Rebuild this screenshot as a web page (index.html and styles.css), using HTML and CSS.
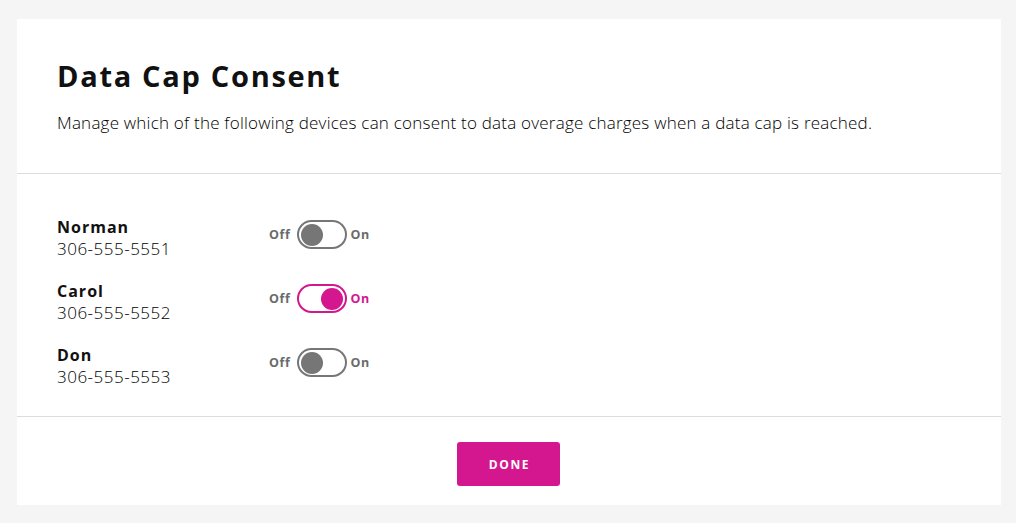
FILE: index.html
```html
<!DOCTYPE html>
<html lang="en">
<head>
<meta charset="utf-8">
<title>Data Cap Consent</title>
<link rel="stylesheet" href="styles.css">
</head>
<body>
<main class="card">
  <header class="card-header">
    <h1 class="title">Data Cap Consent</h1>
    <p class="intro">Manage which of the following devices can consent to data overage charges when a data cap is reached.</p>
  </header>
  <section class="devices">
    <div class="device">
      <div class="device-info">
        <div class="device-name">Norman</div>
        <div class="device-phone">306-555-5551</div>
      </div>
      <div class="switch">
        <span class="switch-label">Off</span>
        <span class="track"><span class="knob"></span></span>
        <span class="switch-label">On</span>
      </div>
    </div>
    <div class="device">
      <div class="device-info">
        <div class="device-name">Carol</div>
        <div class="device-phone">306-555-5552</div>
      </div>
      <div class="switch is-on">
        <span class="switch-label">Off</span>
        <span class="track"><span class="knob"></span></span>
        <span class="switch-label label-on">On</span>
      </div>
    </div>
    <div class="device">
      <div class="device-info">
        <div class="device-name">Don</div>
        <div class="device-phone">306-555-5553</div>
      </div>
      <div class="switch">
        <span class="switch-label">Off</span>
        <span class="track"><span class="knob"></span></span>
        <span class="switch-label">On</span>
      </div>
    </div>
  </section>
  <footer class="card-footer">
    <button class="done-btn" type="button">DONE</button>
  </footer>
</main>
</body>
</html>
```

FILE: styles.css
```css
* { box-sizing: border-box; }
html, body { margin: 0; padding: 0; }
body {
  background: #f5f5f5;
  font-family: "Open Sans", "Liberation Sans", sans-serif;
  color: #1a1a1a;
  padding: 19px 15px 18px 17px;
}
.card {
  background: #fff;
  width: 984px;
  height: 486px;
  display: flex;
  flex-direction: column;
}
.card-header {
  padding: 40px 40px 0 40px;
  height: 155px;
  border-bottom: 1px solid #dcdcdc;
}
.title {
  margin: 0;
  font-family: "Open Sans", "Liberation Sans", sans-serif;
  font-weight: 700;
  font-size: 29px;
  line-height: 34px;
  color: #111;
  letter-spacing: 1.7px;
}
.intro {
  margin: 18px 0 0 0;
  font-size: 17px;
  line-height: 24px;
  color: #000;
  font-weight: 300;
  letter-spacing: 0.22px;
}
.devices {
  padding: 42px 40px 0 40px;
  height: 243px;
  border-bottom: 1px solid #dcdcdc;
  display: flex;
  flex-direction: column;
  gap: 20px;
}
.device {
  display: flex;
  align-items: flex-start;
}
.device-info { width: 212px; }
.device-name {
  font-weight: 700;
  font-size: 16px;
  line-height: 22px;
  color: #111;
  letter-spacing: 1px;
}
.device-phone {
  font-size: 17px;
  line-height: 22px;
  color: #000;
  font-weight: 300;
  letter-spacing: 0.5px;
}
.switch {
  display: flex;
  align-items: center;
  margin-top: 4px;
}
.switch-label {
  font-weight: 700;
  font-size: 12.5px;
  color: #6b6b6b;
  letter-spacing: 0.6px;
}
.track {
  width: 50px;
  height: 29px;
  border: 2px solid #767676;
  border-radius: 15px;
  margin: 0 3px 0 7px;
  display: flex;
  align-items: center;
  padding: 0 2px;
}
.knob {
  width: 22px;
  height: 22px;
  border-radius: 50%;
  background: #767676;
}
.is-on .track {
  border-color: #d4178f;
  justify-content: flex-end;
}
.is-on .knob { background: #d4178f; }
.is-on .label-on { color: #d4178f; }
.card-footer {
  flex: 1;
  display: flex;
  justify-content: center;
  align-items: flex-start;
  padding-top: 25px;
}
.done-btn {
  width: 103px;
  height: 44px;
  margin-right: 1px;
  background: #d4178f;
  border: none;
  border-radius: 3px;
  color: #fff;
  font-family: "Open Sans", "Liberation Sans", sans-serif;
  font-weight: 700;
  font-size: 12px;
  letter-spacing: 1.6px;
  padding: 0 0 0 2px;
}
```
